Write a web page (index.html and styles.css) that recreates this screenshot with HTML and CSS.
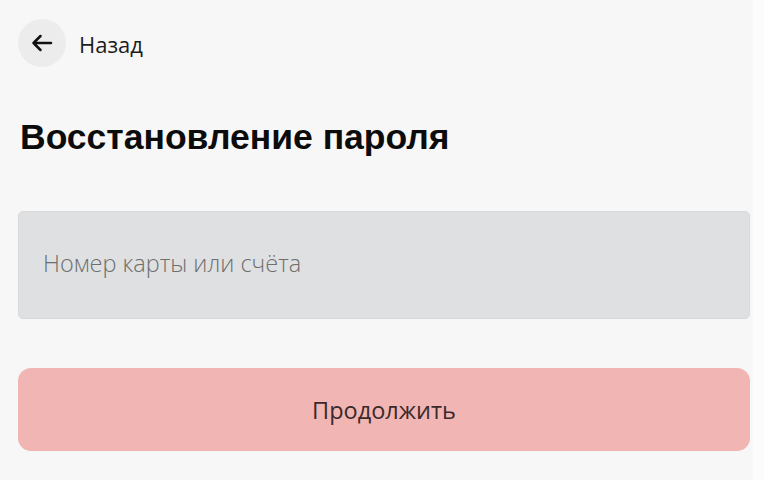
FILE: index.html
```html
<!DOCTYPE html>
<html lang="ru">
<head>
<meta charset="utf-8">
<title>Восстановление пароля</title>
<link rel="stylesheet" href="styles.css">
</head>
<body>
<div class="page">
  <div class="back">
    <span class="back-circle">
      <svg width="24" height="24" viewBox="0 0 24 24" fill="none" stroke="#111" stroke-width="2.5" stroke-linecap="round" stroke-linejoin="round"><path d="M21 12H3.5M10.5 5l-7 7 7 7"/></svg>
    </span>
    <span class="back-label">Назад</span>
  </div>
  <h1 class="title">Восстановление пароля</h1>
  <div class="field">Номер карты или счёта</div>
  <button class="submit">Продолжить</button>
</div>
</body>
</html>
```
FILE: styles.css
```css
html, body {
  margin: 0;
  padding: 0;
  background: #fcfcfc;
}
body {
  width: 764px;
  height: 480px;
  overflow: hidden;
  font-family: "Open Sans", "Noto Sans", sans-serif;
}
.page {
  width: 753px;
  height: 480px;
  box-sizing: border-box;
  background: #f8f7f7;
  padding: 19px 3px 0 18px;
  display: flex;
  flex-direction: column;
}
.back {
  display: flex;
  align-items: center;
  gap: 13px;
  height: 48px;
}
.back-circle {
  width: 48px;
  height: 48px;
  border-radius: 50%;
  background: #ececed;
  display: flex;
  align-items: center;
  justify-content: center;
}
.back-label {
  padding-top: 1px;
  font-size: 22px;
  color: #1c1c1c;
  font-weight: 400;
}
.title {
  margin: 48px 0 0 2px;
  font-family: "Liberation Sans", Arial, sans-serif;
  font-weight: 700;
  font-size: 35.5px;
  line-height: 44px;
  color: #0c0c0c;
}
.field {
  margin-top: 52px;
  height: 108px;
  box-sizing: border-box;
  background: #dfe0e1;
  border: 1px solid #d8d9da;
  border-radius: 5px;
  padding: 0 24px 4px;
  display: flex;
  align-items: center;
  font-size: 23.5px;
  font-weight: 300;
  color: #6e6e6e;
}
.submit {
  margin-top: 49px;
  height: 83px;
  width: 100%;
  border: none;
  border-radius: 13px;
  background: #f1b6b3;
  font-family: "Open Sans", "Noto Sans", sans-serif;
  font-size: 23.5px;
  color: #3b2a2b;
  cursor: pointer;
}
```
